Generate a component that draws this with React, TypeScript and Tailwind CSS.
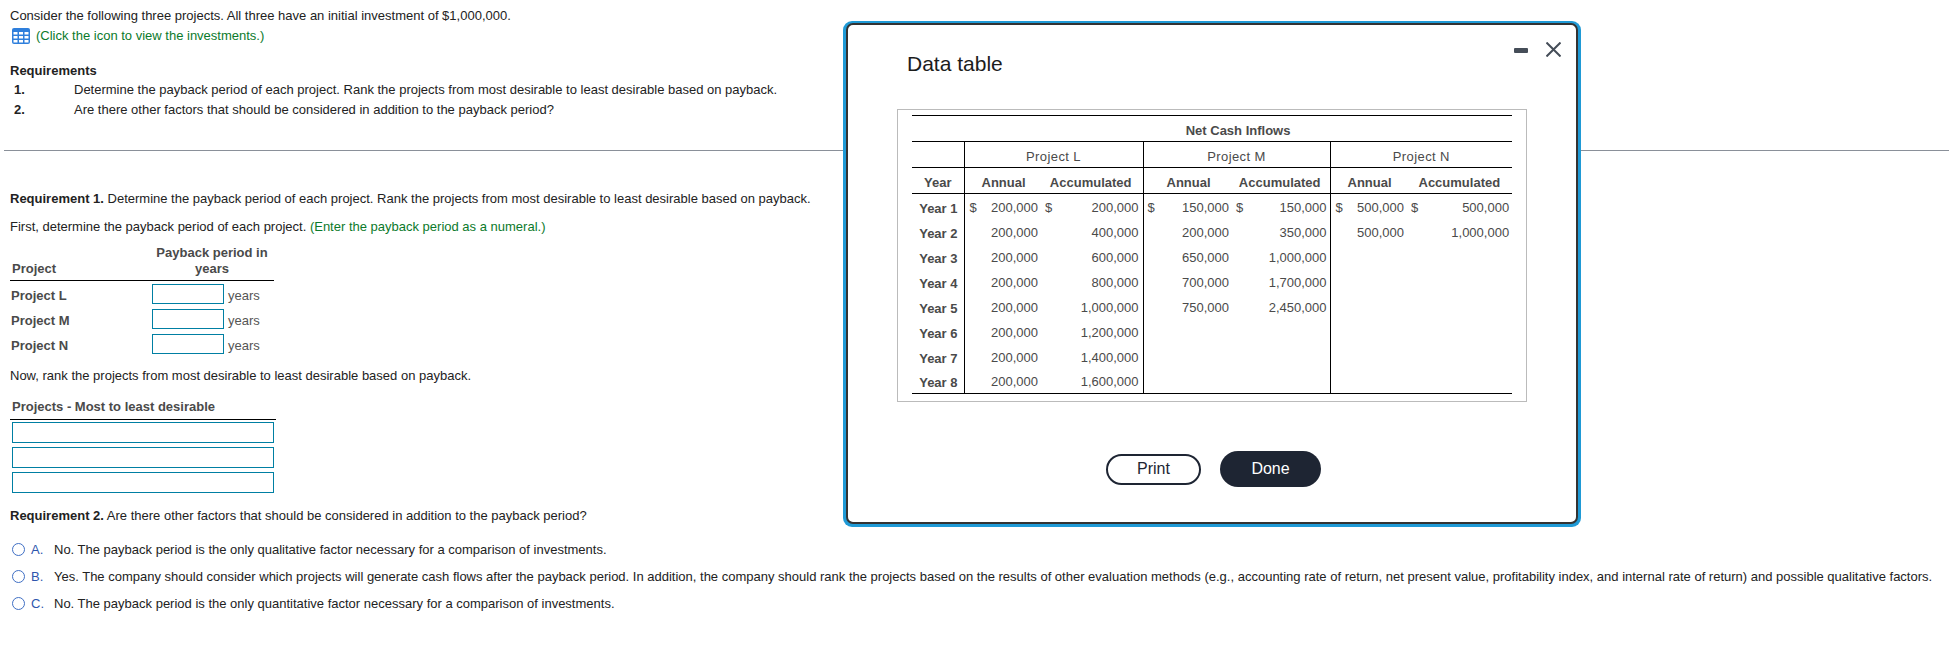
const font = "font-['Liberation_Sans',Arial,sans-serif]";

function Line({ className = "", children }: { className?: string; children: React.ReactNode }) {
  return <div className={"leading-[16px] whitespace-nowrap " + className}>{children}</div>;
}

function GridIcon() {
  return (
    <svg width="18" height="16" viewBox="0 0 18 16" className="shrink-0">
      <rect x="0" y="0" width="18" height="16" rx="2" fill="#2f7fdc" />
      {[1.5, 7, 12.5].flatMap((x) =>
        [4, 8, 12].map((y) => <rect key={x + "-" + y} x={x} y={y} width="4" height="2.5" fill="#fff" />)
      )}
    </svg>
  );
}

function Radio({ letter, children }: { letter: string; children: React.ReactNode }) {
  return (
    <div className="flex items-center h-[27px] whitespace-nowrap">
      <span className="w-[13px] h-[13px] rounded-full border border-[#3f6fc4] ml-[12px] shrink-0" />
      <span className="text-[#2f56ad] w-[29px] pl-[6px] shrink-0">{letter}.</span>
      <span className="text-[#222]">{children}</span>
    </div>
  );
}

const years = [
  ["Year 1", "200,000", "200,000", "150,000", "150,000", "500,000", "500,000"],
  ["Year 2", "200,000", "400,000", "200,000", "350,000", "500,000", "1,000,000"],
  ["Year 3", "200,000", "600,000", "650,000", "1,000,000", "", ""],
  ["Year 4", "200,000", "800,000", "700,000", "1,700,000", "", ""],
  ["Year 5", "200,000", "1,000,000", "750,000", "2,450,000", "", ""],
  ["Year 6", "200,000", "1,200,000", "", "", "", ""],
  ["Year 7", "200,000", "1,400,000", "", "", "", ""],
  ["Year 8", "200,000", "1,600,000", "", "", "", ""],
];

const colWidths = [52, 18, 59, 19, 83, 22, 67, 18, 80, 20, 57, 18, 87];

function DataTable() {
  return (
    <table className="border-collapse table-fixed w-[600px] text-[13px] text-[#4a4a4a]">
      <colgroup>
        {colWidths.map((w, i) => (
          <col key={i} style={{ width: w }} />
        ))}
      </colgroup>
      <thead>
        <tr className="h-[26px] border-t border-b border-black">
          <th colSpan={13} className="font-bold text-center pl-[52px] pt-[5px] leading-[16px]">Net Cash Inflows</th>
        </tr>
        <tr className="h-[26px] border-b border-black">
          <th className="border-r border-black" />
          <th colSpan={4} className="font-normal border-r border-black tracking-[0.4px] pt-[5px] leading-[16px]">Project L</th>
          <th colSpan={4} className="font-normal border-r border-black tracking-[0.4px] pt-[5px] leading-[16px]">Project M</th>
          <th colSpan={4} className="font-normal tracking-[0.4px] pt-[5px] leading-[16px]">Project N</th>
        </tr>
        <tr className="h-[26px] border-b border-black">
          <th className="border-r border-black font-bold pt-[4px] leading-[16px]">Year</th>
          <th colSpan={2} className="font-bold text-left pl-[17px] pt-[5px] leading-[16px]">Annual</th>
          <th colSpan={2} className="border-r border-black font-bold text-right pr-[11px] pt-[5px] leading-[16px]">Accumulated</th>
          <th colSpan={2} className="font-bold text-left pl-[23px] pt-[5px] leading-[16px]">Annual</th>
          <th colSpan={2} className="border-r border-black font-bold text-right pr-[9px] pt-[5px] leading-[16px]">Accumulated</th>
          <th colSpan={2} className="font-bold text-left pl-[17px] pt-[5px] leading-[16px]">Annual</th>
          <th colSpan={2} className="font-bold text-right pr-[12px] pt-[5px] leading-[16px]">Accumulated</th>
        </tr>
      </thead>
      <tbody className="leading-[16px]">
        {years.map((r, i) => (
          <tr key={r[0]} className={"h-[25px] " + (i === 7 ? "border-b border-black" : "")}>
            <td className="border-r border-black font-bold text-right pr-[6px] pt-[5px] whitespace-nowrap">{r[0]}</td>
            <td className="pl-[5px] pt-[3px]">{i === 0 ? "$" : ""}</td>
            <td className="text-right pr-[3px] pt-[3px]">{r[1]}</td>
            <td className="pl-[4px] pt-[3px]">{i === 0 ? "$" : ""}</td>
            <td className="text-right pr-[4px] pt-[3px] border-r border-black">{r[2]}</td>
            <td className="pl-[4px] pt-[3px]">{i === 0 ? "$" : ""}</td>
            <td className="text-right pr-[3px] pt-[3px]">{r[3]}</td>
            <td className="pl-[4px] pt-[3px]">{i === 0 ? "$" : ""}</td>
            <td className="text-right pr-[3px] pt-[3px] border-r border-black">{r[4]}</td>
            <td className="pl-[5px] pt-[3px]">{i === 0 ? "$" : ""}</td>
            <td className="text-right pr-[3px] pt-[3px]">{r[5]}</td>
            <td className="pl-[4px] pt-[3px]">{i === 0 ? "$" : ""}</td>
            <td className="text-right pr-[3px] pt-[3px]">{r[6]}</td>
          </tr>
        ))}
      </tbody>
    </table>
  );
}

function Modal() {
  return (
    <div className="absolute left-[843px] top-[21px] w-[738px] h-[506px] rounded-[9px] bg-[#1f9ad6] pr-[3px] pb-[3px] pl-[3px] pt-[2px]">
      <div className="relative w-full h-full bg-white rounded-[7px] border-2 border-[#333] pl-[49px] pt-[26px]">
        <div className="text-[21px] leading-[26px] text-[#1c1c1c] pl-[10px]">Data table</div>
        <svg width="14" height="5" viewBox="0 0 14 5" className="absolute left-[666px] top-[23px]">
          <rect width="14" height="5" rx="1" fill="#454d58" />
        </svg>
        <svg width="15" height="15" viewBox="0 0 15 15" className="absolute left-[698px] top-[17px]">
          <path d="M0.5 0.5 L14.5 14.5 M14.5 0.5 L0.5 14.5" stroke="#454d58" strokeWidth="2" fill="none" />
        </svg>
        <div className="mt-[32px] w-[630px] h-[293px] border border-[#bbb] pl-[14px] pt-[5px]">
          <DataTable />
        </div>
        <div className="flex items-center gap-[19px] mt-[49px] ml-[209px]">
          <div className="w-[95px] h-[31px] rounded-full border-2 border-[#1e2533] flex items-center justify-center text-[16px] text-[#1e2533]">Print</div>
          <div className="w-[101px] h-[36px] rounded-full bg-[#1e2533] flex items-center justify-center text-[16px] text-white">Done</div>
        </div>
      </div>
    </div>
  );
}

export default function App() {
  return (
    <div className={"relative w-[1949px] h-[669px] bg-white overflow-hidden text-[13px] text-[#222] " + font}>
      <div className="pt-[8px]">
        <Line className="pl-[10px] h-[18px]">Consider the following three projects. All three have an initial investment of $1,000,000.</Line>
        <div className="flex items-center gap-[6px] pl-[12px] h-[20px] text-[#0b7a2b]">
          <GridIcon />
          <span>(Click the icon to view the investments.)</span>
        </div>
        <Line className="pl-[10px] font-bold mt-[17px] h-[19px]">Requirements</Line>
        <div className="flex h-[20px] pl-[14px] leading-[16px]"><b className="w-[60px]">1.</b><span>Determine the payback period of each project. Rank the projects from most desirable to least desirable based on payback.</span></div>
        <div className="flex h-[20px] pl-[14px] leading-[16px]"><b className="w-[60px]">2.</b><span>Are there other factors that should be considered in addition to the payback period?</span></div>
      </div>
      <div className="h-px bg-[#8a9099] ml-[4px] mt-[28px]" />
      <Line className="pl-[10px] mt-[40px]"><b>Requirement 1.</b> Determine the payback period of each project. Rank the projects from most desirable to least desirable based on payback.</Line>
      <Line className="pl-[10px] mt-[12px]">First, determine the payback period of each project. <span className="text-[#0b7a2b]">(Enter the payback period as a numeral.)</span></Line>

      <div className="ml-[10px] mt-[10px] w-[264px] text-[#4a4a4a] font-bold">
        <div className="flex items-end border-b border-black h-[36px] pb-[3px] leading-[16px]">
          <span className="pl-[2px] w-[132px]">Project</span>
          <span className="w-[132px] text-center pl-[8px]">Payback period in<br />years</span>
        </div>
        <div className="flex flex-col gap-[5px] mt-[3px]">
          {["Project L", "Project M", "Project N"].map((p) => (
            <div key={p} className="flex items-start h-[20px] leading-[16px]">
              <span className="w-[142px] pl-[1px] pt-[4px]">{p}</span>
              <span className="w-[72px] h-[20px] border border-[#007fa3] bg-white" />
              <span className="pl-[4px] pt-[4px] font-normal text-[#555]">years</span>
            </div>
          ))}
        </div>
      </div>

      <Line className="pl-[10px] mt-[14px]">Now, rank the projects from most desirable to least desirable based on payback.</Line>

      <div className="ml-[10px] mt-[15px] w-[266px]">
        <div className="border-b border-black h-[21px] pl-[2px] font-bold text-[#4a4a4a] leading-[16px]">Projects - Most to least desirable</div>
        <div className="flex flex-col gap-[4px] mt-[2px] pl-[2px]">
          <div className="w-[262px] h-[21px] border border-[#007fa3]" />
          <div className="w-[262px] h-[21px] border border-[#007fa3]" />
          <div className="w-[262px] h-[21px] border border-[#007fa3]" />
        </div>
      </div>

      <Line className="pl-[10px] mt-[15px]"><b>Requirement 2.</b> Are there other factors that should be considered in addition to the payback period?</Line>
      <div className="mt-[12px]">
        <Radio letter="A">No. The payback period is the only qualitative factor necessary for a comparison of investments.</Radio>
        <Radio letter="B">Yes. The company should consider which projects will generate cash flows after the payback period. In addition, the company should rank the projects based on the results of other evaluation methods (e.g., accounting rate of return, net present value, profitability index, and internal rate of return) and possible qualitative factors.</Radio>
        <Radio letter="C">No. The payback period is the only quantitative factor necessary for a comparison of investments.</Radio>
      </div>

      <Modal />
    </div>
  );
}
